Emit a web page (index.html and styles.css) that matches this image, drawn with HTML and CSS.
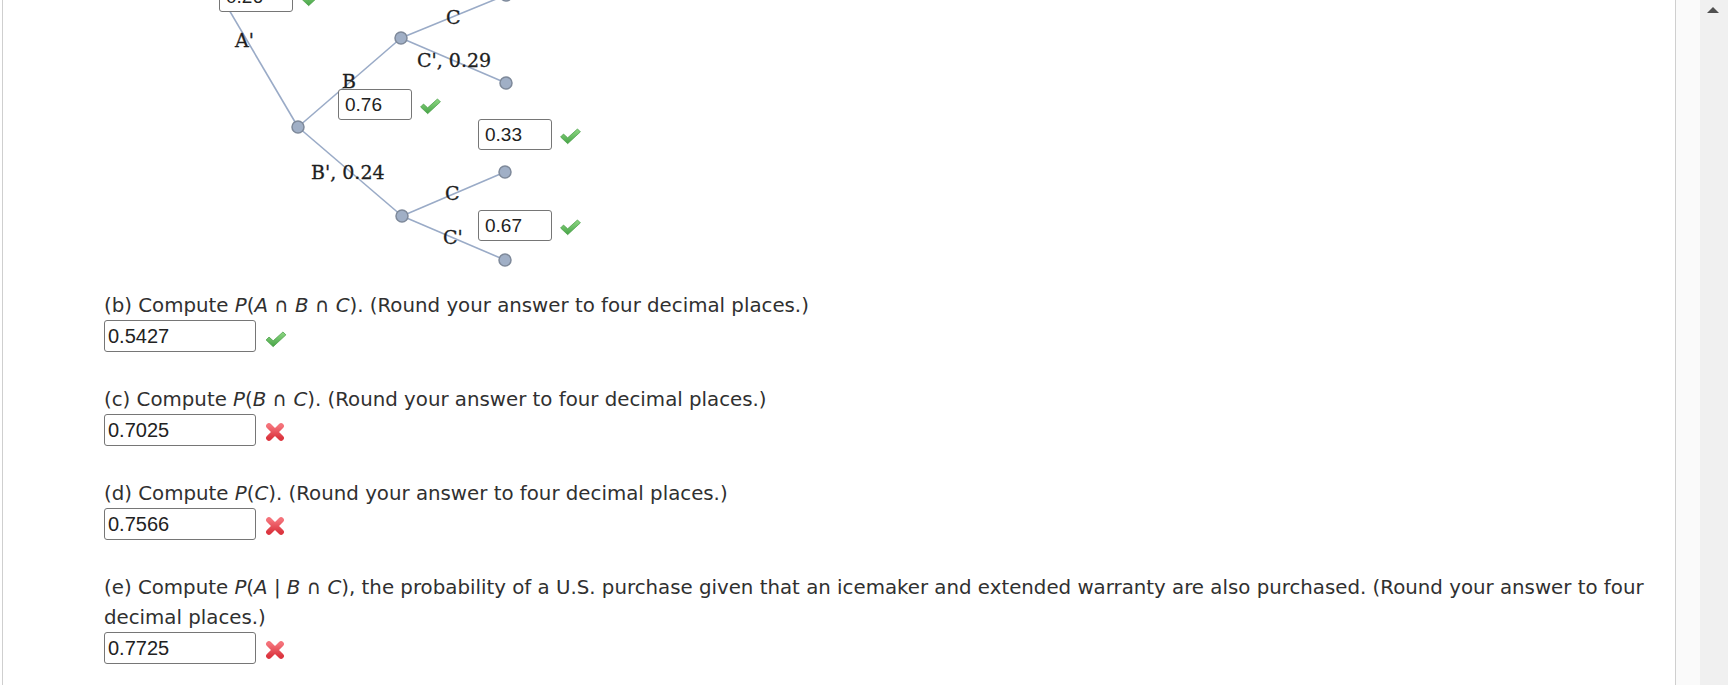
FILE: index.html
```html
<!DOCTYPE html>
<html lang="en">
<head>
<meta charset="utf-8">
<title>Probability tree</title>
<link rel="stylesheet" href="styles.css">
</head>
<body>
<svg class="defs" aria-hidden="true">
  <defs>
    <linearGradient id="gCheck" x1="0" y1="0" x2="0" y2="1">
      <stop offset="0" stop-color="#8fd884"/>
      <stop offset="1" stop-color="#47a447"/>
    </linearGradient>
    <linearGradient id="gCross" x1="0" y1="0" x2="0" y2="1">
      <stop offset="0" stop-color="#f4727a"/>
      <stop offset="1" stop-color="#dc3640"/>
    </linearGradient>
    <symbol id="check" viewBox="0 0 24 18">
      <path d="M1.5 9.5 L4.6 6.4 L9 10.4 L19.4 1 L22.5 4.1 L9 16.6 Z" fill="url(#gCheck)" stroke="#4a9f48" stroke-width="0.8" stroke-linejoin="round"/>
    </symbol>
    <symbol id="cross" viewBox="0 0 20 20">
      <path d="M4.5 4.5 L15.5 15.5 M15.5 4.5 L4.5 15.5" stroke="url(#gCross)" stroke-width="5.2" stroke-linecap="round" fill="none"/>
    </symbol>
  </defs>
</svg>
<div class="page">
  <main class="panel">
    <div class="tree">
      <svg class="tree-svg" width="700" height="289" viewBox="0 0 700 289">
        <g transform="translate(-3 0)">
          <g class="edges">
            <line x1="212" y1="-19" x2="298" y2="127"/>
            <line x1="298" y1="127" x2="401" y2="38"/>
            <line x1="401" y1="38" x2="506" y2="-5"/>
            <line x1="401" y1="38" x2="506" y2="83"/>
            <line x1="298" y1="127" x2="402" y2="216"/>
            <line x1="402" y1="216" x2="505" y2="172"/>
            <line x1="402" y1="216" x2="505" y2="260"/>
          </g>
          <g class="nodes">
            <circle cx="298" cy="127" r="6"/>
            <circle cx="401" cy="38" r="6"/>
            <circle cx="506" cy="-5" r="6"/>
            <circle cx="506" cy="83" r="6"/>
            <circle cx="402" cy="216" r="6"/>
            <circle cx="505" cy="172" r="6"/>
            <circle cx="505" cy="260" r="6"/>
          </g>
          <g class="labels">
            <text x="235" y="47">A'</text>
            <text x="446" y="24">C</text>
            <text x="417" y="67">C', 0.29</text>
            <text x="342" y="88">B</text>
            <text x="311" y="179">B', 0.24</text>
            <text x="445" y="200">C</text>
            <text x="443" y="244">C'</text>
          </g>
        </g>
      </svg>
      <div class="tree-answer ta-top"><span class="tree-field">0.26</span><svg class="icon-check"><use href="#check"/></svg></div>
      <div class="tree-answer ta-b"><span class="tree-field">0.76</span><svg class="icon-check"><use href="#check"/></svg></div>
      <div class="tree-answer ta-c1"><span class="tree-field">0.33</span><svg class="icon-check"><use href="#check"/></svg></div>
      <div class="tree-answer ta-c2"><span class="tree-field">0.67</span><svg class="icon-check"><use href="#check"/></svg></div>
    </div>

    <section class="questions">
      <div class="question">
        <p class="prompt">(b) Compute <i>P</i>(<i>A</i> ∩ <i>B</i> ∩ <i>C</i>). (Round your answer to four decimal places.)</p>
        <div class="answer"><span class="field">0.5427</span><svg class="icon-check big"><use href="#check"/></svg></div>
      </div>
      <div class="question">
        <p class="prompt">(c) Compute <i>P</i>(<i>B</i> ∩ <i>C</i>). (Round your answer to four decimal places.)</p>
        <div class="answer"><span class="field">0.7025</span><svg class="icon-cross"><use href="#cross"/></svg></div>
      </div>
      <div class="question">
        <p class="prompt">(d) Compute <i>P</i>(<i>C</i>). (Round your answer to four decimal places.)</p>
        <div class="answer"><span class="field">0.7566</span><svg class="icon-cross"><use href="#cross"/></svg></div>
      </div>
      <div class="question">
        <p class="prompt">(e) Compute <i>P</i>(<i>A</i> | <i>B</i> ∩ <i>C</i>), the probability of a U.S. purchase given that an icemaker and extended warranty are also purchased. (Round your answer to four decimal places.)</p>
        <div class="answer"><span class="field">0.7725</span><svg class="icon-cross"><use href="#cross"/></svg></div>
      </div>
    </section>
  </main>
  <div class="gutter"></div>
  <div class="scrollbar"><span class="arrow-up"></span></div>
</div>
</body>
</html>
```

FILE: styles.css
```css
html, body {
  margin: 0;
  padding: 0;
  height: 100%;
  overflow: hidden;
  background: #ffffff;
}

.defs {
  position: absolute;
  width: 0;
  height: 0;
  overflow: hidden;
}

.page {
  display: flex;
  height: 685px;
}

.panel {
  flex: 1;
  min-width: 0;
  margin-left: 2px;
  border-left: 1px solid #cfcfcf;
  border-right: 1px solid #cfcfcf;
  background: #ffffff;
  overflow: hidden;
  font-family: "DejaVu Sans", Verdana, sans-serif;
  color: #333333;
}

.gutter {
  width: 24px;
  background: #fafafa;
}

.scrollbar {
  width: 28px;
  background: #f0f0f0;
  display: flex;
  justify-content: center;
  padding-top: 7px;
  box-sizing: border-box;
}

.arrow-up {
  display: block;
  width: 0;
  height: 0;
  margin-right: 3px;
  border-left: 6px solid transparent;
  border-right: 6px solid transparent;
  border-bottom: 6px solid #505050;
}

/* ---------- tree diagram ---------- */
.tree {
  position: relative;
  height: 289px;
}

.tree-svg {
  position: absolute;
  left: 0;
  top: 0;
  overflow: visible;
}

.edges line {
  stroke: #9aabc7;
  stroke-width: 1.6;
}

.nodes circle {
  fill: #a0afc6;
  stroke: #7e899a;
  stroke-width: 1.5;
}

.labels text {
  font-family: "DejaVu Serif", "Liberation Serif", serif;
  font-size: 19px;
  fill: #1e1e1e;
  stroke: #1e1e1e;
  stroke-width: 0.3;
}

.tree-answer {
  position: absolute;
  display: flex;
  align-items: center;
  gap: 7px;
}

.ta-top { left: 216px; top: -19px; }
.ta-b   { left: 335px; top: 89px; }
.ta-c1  { left: 475px; top: 119px; }
.ta-c2  { left: 475px; top: 210px; }

.tree-field {
  box-sizing: border-box;
  width: 74px;
  height: 31px;
  display: flex;
  align-items: center;
  padding-left: 6px;
  border: 1px solid #767676;
  border-radius: 3px;
  background: #ffffff;
  font-family: "Liberation Sans", Arial, sans-serif;
  font-size: 19px;
  color: #222222;
}

.icon-check {
  width: 23px;
  height: 17px;
  margin-top: 4px;
}

.icon-check.big {
  width: 24px;
  height: 17px;
  margin-top: 6px;
}

.icon-cross {
  width: 22px;
  height: 22px;
  margin-top: 4px;
}

/* ---------- questions ---------- */
.questions {
  padding-left: 101px;
  padding-right: 12px;
}

.question {
  margin-bottom: 31px;
}

.prompt {
  margin: 0;
  padding-top: 2px;
  font-size: 19.8px;
  line-height: 30px;
  color: #303030;
}

.prompt i {
  font-style: italic;
}

.answer {
  display: flex;
  align-items: center;
  gap: 8px;
  margin-top: -1px;
}

.field {
  box-sizing: border-box;
  width: 152px;
  height: 32px;
  display: flex;
  align-items: center;
  padding-left: 3px;
  border: 1px solid #767676;
  border-radius: 3px;
  background: #ffffff;
  font-family: "Liberation Sans", Arial, sans-serif;
  font-size: 20px;
  color: #222222;
}
```
